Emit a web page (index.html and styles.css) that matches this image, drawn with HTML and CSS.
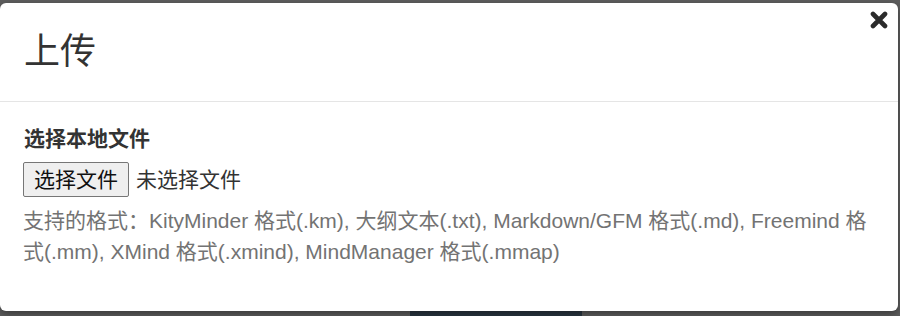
FILE: index.html
```html
<!DOCTYPE html>
<html lang="zh-CN">
<head>
<meta charset="utf-8">
<title>上传</title>
<link rel="stylesheet" href="styles.css">
</head>
<body>
<div class="page">
  <div class="modal">
    <div class="modal-header">
      <h3 class="modal-title">上传</h3>
      <button class="close" type="button" aria-label="关闭">
        <svg width="18" height="18" viewBox="0 0 18 18"><path d="M3 3 L15 15 M15 3 L3 15" stroke="#2b2b2b" stroke-width="4.6" stroke-linecap="round" fill="none"/></svg>
      </button>
    </div>
    <div class="modal-body">
      <label class="label">选择本地文件</label>
      <div class="file-row">
        <button class="file-btn" type="button">选择文件</button>
        <span class="file-name">未选择文件</span>
      </div>
      <p class="help">支持的格式：KityMinder 格式(.km), 大纲文本(.txt), Markdown/GFM 格式(.md), Freemind 格式(.mm), XMind 格式(.xmind), MindManager 格式(.mmap)</p>
    </div>
  </div>
  <div class="backdrop-strip"></div>
</div>
</body>
</html>
```

FILE: styles.css
```css
html, body {
  margin: 0;
  padding: 0;
  height: 100%;
}
body {
  background: #5e5e5e;
  font-family: "Liberation Sans", "Noto Sans CJK SC", sans-serif;
  color: #333333;
  overflow: hidden;
}
.page {
  display: flex;
  flex-direction: column;
  height: 316px;
  padding-top: 3px;
  box-sizing: border-box;
}
.modal {
  position: relative;
  width: 898px;
  background: #ffffff;
  border-radius: 6px;
  box-shadow: 0 3px 9px rgba(0, 0, 0, 0.4);
  flex: none;
}
.modal-header {
  padding: 29px 24px 29px 24px;
  border-bottom: 1px solid #e5e5e5;
}
.modal-title {
  margin: 0;
  font-size: 36px;
  line-height: 40px;
  font-weight: normal;
  color: #333333;
}
.close {
  position: absolute;
  top: 8px;
  right: 10px;
  padding: 0;
  border: 0;
  background: transparent;
  width: 18px;
  height: 18px;
  display: flex;
}
.modal-body {
  padding: 22px 23px 44px 23px;
}
.label {
  display: block;
  font-size: 21px;
  line-height: 30px;
  font-weight: bold;
  margin-bottom: 8px;
  padding-left: 1px;
}
.file-row {
  display: flex;
  align-items: center;
  gap: 7px;
}
.file-btn {
  height: 35px;
  padding: 0 10px;
  font-family: "Liberation Sans", "Noto Sans CJK SC", sans-serif;
  font-size: 21px;
  line-height: 33px;
  color: #111111;
  background: #efefef;
  border: 1px solid #767676;
  border-radius: 2px;
}
.file-name {
  font-size: 21px;
  line-height: 30px;
  color: #333333;
}
.help {
  margin: 8px 0 0 0;
  font-size: 21px;
  line-height: 31px;
  color: #737373;
}
.backdrop-strip {
  flex: 1;
  margin-left: 410px;
  width: 172px;
  background: #2a3641;
}
```
